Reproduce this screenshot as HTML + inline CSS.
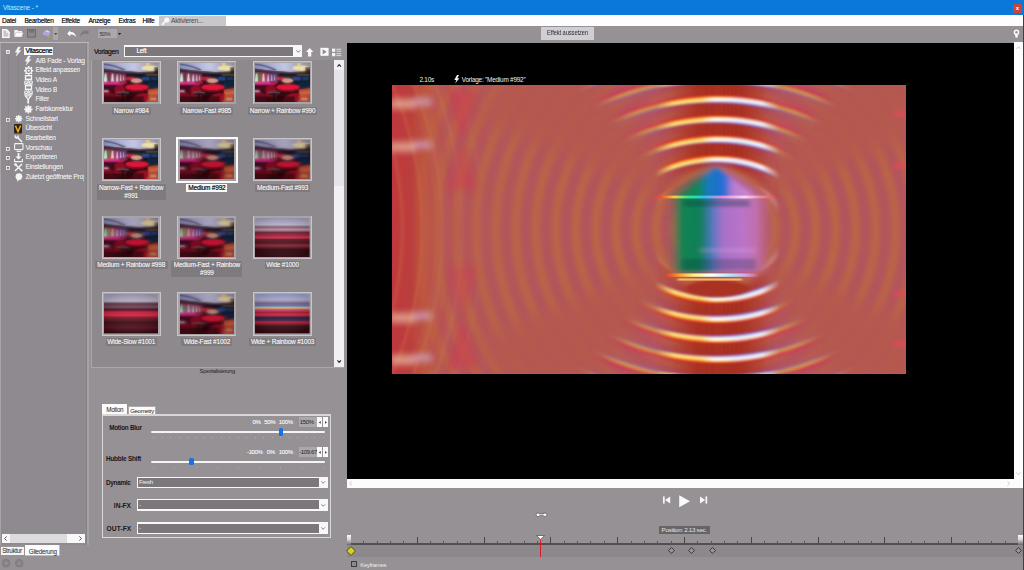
<!DOCTYPE html>
<html><head><meta charset="utf-8"><title>Vitascene</title>
<style>
*{box-sizing:border-box;margin:0;padding:0}
html,body{width:1024px;height:570px;overflow:hidden;background:#959195}
body{font-family:"Liberation Sans",sans-serif;font-size:6.6px;line-height:8px;color:#1c1c1c;position:relative;letter-spacing:-0.12px}
.a{position:absolute}
.t{position:absolute;white-space:nowrap}
.w{color:#ececec}
.b{font-weight:bold}
svg{position:absolute;overflow:visible}
</style></head><body>

<!-- g1_top -->
<div class="a" style="left:0px;top:0px;width:1024px;height:15.2px;background:#0a78d8;"></div><div class="t " style="left:3px;top:3.8px;color:#b4f0ff;font-size:6.5px;letter-spacing:-0.15px">Vitascene - *</div><div class="a" style="left:1013px;top:4px;width:9.2px;height:9.2px;background:#c8453f;"></div><div class="t b" style="left:1015.8px;top:4.4px;color:#fff;font-size:6px">x</div><div class="a" style="left:0px;top:15.2px;width:1022.6px;height:11.3px;background:#fdfdfd;"></div><div class="t " style="left:2px;top:16.9px;color:#262226;font-size:6.6px;letter-spacing:-0.27px;text-shadow:0 0 0.5px #555">Datei</div><div class="t " style="left:24.4px;top:16.9px;color:#262226;font-size:6.6px;letter-spacing:-0.27px;text-shadow:0 0 0.5px #555">Bearbeiten</div><div class="t " style="left:61.4px;top:16.9px;color:#262226;font-size:6.6px;letter-spacing:-0.27px;text-shadow:0 0 0.5px #555">Effekte</div><div class="t " style="left:88.4px;top:16.9px;color:#262226;font-size:6.6px;letter-spacing:-0.27px;text-shadow:0 0 0.5px #555">Anzeige</div><div class="t " style="left:118.4px;top:16.9px;color:#262226;font-size:6.6px;letter-spacing:-0.27px;text-shadow:0 0 0.5px #555">Extras</div><div class="t " style="left:142.6px;top:16.9px;color:#262226;font-size:6.6px;letter-spacing:-0.27px;text-shadow:0 0 0.5px #555">Hilfe</div><div class="a" style="left:159.4px;top:15.6px;width:66.6px;height:10.6px;background:#c9c7c9;"></div><div class="t " style="left:171px;top:16.9px;color:#4a464a;font-size:6.6px;letter-spacing:-0.2px">Aktivieren...</div><svg style="left:161.2px;top:16.6px" width="9" height="9" viewBox="0 0 9 9"><circle cx="5.8" cy="3" r="2.5" fill="#f8f8f8"/><path d="M4.4 4.4L0.8 8" stroke="#f8f8f8" stroke-width="1.7"/><path d="M2 6.6L3.2 7.8" stroke="#f8f8f8" stroke-width="1"/></svg><div class="a" style="left:0px;top:26.5px;width:1022.6px;height:15.7px;background:#959195;"></div><svg style="left:2.3px;top:29px" width="8" height="9" viewBox="0 0 8 9"><path d="M0.7 0.7H4.6L7.1 3.2V8.3H0.7Z" fill="#c9c5c9" stroke="#fbfbfb" stroke-width="1.3"/><path d="M4.4 0.8V3.4H7" fill="none" stroke="#fbfbfb" stroke-width="0.8"/></svg><svg style="left:14px;top:29px" width="9.4" height="9" viewBox="0 0 9.4 9"><path d="M0.3 1H3.4L4.2 2H8V8H0.3Z" fill="#f2f0f2"/><path d="M0.3 8L1.8 3.6H9.3L7.8 8Z" fill="#fbfbfb" stroke="#a4a0a4" stroke-width="0.4"/></svg><svg style="left:27px;top:29.2px" width="9" height="8.6" viewBox="0 0 9 8.6"><rect x="0.5" y="0.5" width="8" height="7.6" fill="#8c888c" stroke="#6f6b6f" stroke-width="1"/><rect x="1.8" y="0.8" width="5.4" height="2.8" fill="#757175"/></svg><svg style="left:42px;top:28.8px" width="9.4" height="9.4" viewBox="0 0 9.4 9.4"><path d="M0.8 4.2C2 1.2 6 0.6 8.6 3.2C8.2 5.6 6.4 7 4 6.6C2.6 6.4 1.4 5.6 0.8 4.2Z" fill="#a8a6e6"/><path d="M3 2C4.6 1.2 6.6 1.6 7.8 3.2C6 3.4 4.4 3 3 2Z" fill="#d6d8ff"/><path d="M1 4.6L2.4 6.2M5.6 6.6L6.4 8.4M6 7.2L7.4 6.6" stroke="#e0b030" stroke-width="0.9"/></svg><div class="a" style="left:53px;top:26.6px;width:5.4px;height:13px;background:#aaa6aa;"></div><svg style="left:54px;top:32.6px" width="3.4" height="2" viewBox="0 0 3.4 2"><path d="M0 0H3.4L1.7 2Z" fill="#4e4a4e"/></svg><svg style="left:66.6px;top:30px" width="9.4" height="7.4" viewBox="0 0 9.4 7.4"><path d="M0.2 3.4L3.2 0.2V2C6.4 1.6 8.8 3.6 9 7.2C7.8 5 6 4.2 3.2 4.6V6.4Z" fill="#fbfbfb"/></svg><svg style="left:79.6px;top:30.4px" width="8.6" height="7" viewBox="0 0 8.6 7"><path d="M8.6 0.6H5.6C2.6 0.6 0.6 2.6 0.2 6.8C1.6 4.4 3 3.6 5.4 3.8H8.6Z" fill="#7e7a7e"/></svg><div class="a" style="left:98.2px;top:29px;width:18.6px;height:9px;background:#aba7ab;"></div><div class="t " style="left:99.4px;top:29.6px;color:#3a363a;font-size:5.9px;letter-spacing:-0.3px">50%</div><svg style="left:118.2px;top:32.6px" width="3.2" height="2" viewBox="0 0 3.2 2"><path d="M0 0H3.2L1.6 2Z" fill="#1c1c1c"/></svg><div class="a" style="left:541px;top:26.5px;width:53px;height:13.6px;background:#d1ced3;"></div><div class="t " style="left:546.6px;top:29.4px;color:#302c30;font-size:7px;letter-spacing:-0.1px;transform:scaleX(0.82);transform-origin:0 0">Effekt aussetzen</div><svg style="left:1013.4px;top:28.6px" width="7" height="9.4" viewBox="0 0 7 9.4"><path d="M3.5 0.4A2.9 2.9 0 0 1 6.4 3.3C6.4 5 4.6 5.8 4.4 8.8H2.6C2.4 5.8 0.6 5 0.6 3.3A2.9 2.9 0 0 1 3.5 0.4Z" fill="#f8f8f8"/><circle cx="3.5" cy="3.2" r="1.2" fill="#959195"/></svg>
<!-- g2_tree -->
<div class="a" style="left:0px;top:42px;width:89px;height:503.4px;background:#a6a2a6;"></div><div class="a" style="left:1.4px;top:43.2px;width:85.2px;height:501.4px;background:#8e8a8f;"></div><div class="a" style="left:86.2px;top:43.2px;width:0.9px;height:501.4px;background:#858186;"></div><div class="a" style="left:0px;top:42px;width:88.6px;height:1.2px;background:#bebabe;"></div><div class="a" style="left:7.8px;top:55px;width:0.5px;height:118px;background:#878387;"></div><div class="a" style="left:18.2px;top:56px;width:0.5px;height:53px;background:#878387;"></div><svg style="left:6px;top:49.9px" width="3.8" height="3.8" viewBox="0 0 3.8 3.8"><rect x="0" y="0" width="3.8" height="3.8" fill="#f2f2f2"/><path d="M0.8 1.9H3" stroke="#4a464a" stroke-width="0.8"/></svg><svg style="left:15.4px;top:46.5px" width="6" height="9" viewBox="0 0 6 9"><path d="M3.2 0L0.3 5.2H2.6L1.2 9L5.8 3.5H3.5L5.4 0Z" fill="#f4f4f4" stroke="#f4f4f4" stroke-width="0.5" stroke-linejoin="round"/></svg><div class="a" style="left:24.2px;top:46.6px;width:29px;height:8.9px;background:#fafafa;"></div><div class="t " style="left:25.4px;top:47px;color:#1a161a;font-size:6.7px;letter-spacing:-0.28px;text-shadow:0 0 0.5px #333">Vitascene</div><svg style="left:25.4px;top:56.17px" width="6" height="9" viewBox="0 0 6 9"><path d="M3.2 0L0.3 5.2H2.6L1.2 9L5.8 3.5H3.5L5.4 0Z" fill="#f4f4f4" stroke="#f4f4f4" stroke-width="0.5" stroke-linejoin="round"/></svg><div class="t w" style="left:35.4px;top:56.67px;font-size:6.7px;letter-spacing:-0.2px;max-width:50.8px;overflow:hidden;color:#e4e2e4;text-shadow:0 0 0.5px #dcdcdc">A/B Fade - Vorlag</div><svg style="left:23.7px;top:65.64px" width="9.4" height="9.4" viewBox="0 0 9.4 9.4"><rect x="3.9" y="0" width="1.6" height="9.4" transform="rotate(0 4.7 4.7)" fill="#f4f4f4"/><rect x="3.9" y="0" width="1.6" height="9.4" transform="rotate(45 4.7 4.7)" fill="#f4f4f4"/><rect x="3.9" y="0" width="1.6" height="9.4" transform="rotate(90 4.7 4.7)" fill="#f4f4f4"/><rect x="3.9" y="0" width="1.6" height="9.4" transform="rotate(135 4.7 4.7)" fill="#f4f4f4"/><circle cx="4.7" cy="4.7" r="3.4" fill="#f4f4f4"/><circle cx="4.7" cy="4.7" r="2.2" fill="#8e8a8f"/><circle cx="4.7" cy="4.7" r="1.1" fill="#f4f4f4"/></svg><div class="t w" style="left:35.4px;top:66.34px;font-size:6.7px;letter-spacing:-0.2px;max-width:50.8px;overflow:hidden;color:#e4e2e4;text-shadow:0 0 0.5px #dcdcdc">Effekt anpassen</div><svg style="left:23.9px;top:75.21px" width="9" height="9.6" viewBox="0 0 9 9.6"><rect x="1.5" y="0.7" width="6" height="3.6" fill="none" stroke="#f4f4f4" stroke-width="1.4"/><path d="M4.5 4.6V6.2" stroke="#f4f4f4" stroke-width="1.2"/><circle cx="2" cy="7.1" r="1.4" fill="none" stroke="#f4f4f4" stroke-width="1.1"/><circle cx="7" cy="7.1" r="1.4" fill="none" stroke="#f4f4f4" stroke-width="1.1"/><path d="M3.2 7.1H5.8M0.3 9.1H8.7" stroke="#f4f4f4" stroke-width="1.1"/></svg><div class="t w" style="left:35.4px;top:76.01px;font-size:6.7px;letter-spacing:-0.2px;max-width:50.8px;overflow:hidden;color:#e4e2e4;text-shadow:0 0 0.5px #dcdcdc">Video A</div><svg style="left:23.9px;top:84.88px" width="9" height="9.6" viewBox="0 0 9 9.6"><rect x="1.5" y="0.7" width="6" height="3.6" fill="none" stroke="#f4f4f4" stroke-width="1.4"/><path d="M4.5 4.6V6.2" stroke="#f4f4f4" stroke-width="1.2"/><circle cx="2" cy="7.1" r="1.4" fill="none" stroke="#f4f4f4" stroke-width="1.1"/><circle cx="7" cy="7.1" r="1.4" fill="none" stroke="#f4f4f4" stroke-width="1.1"/><path d="M3.2 7.1H5.8M0.3 9.1H8.7" stroke="#f4f4f4" stroke-width="1.1"/></svg><div class="t w" style="left:35.4px;top:85.68px;font-size:6.7px;letter-spacing:-0.2px;max-width:50.8px;overflow:hidden;color:#e4e2e4;text-shadow:0 0 0.5px #dcdcdc">Video B</div><svg style="left:24.2px;top:95.05px" width="8.4" height="8.6" viewBox="0 0 8.4 8.6"><path d="M0 0.2H8.4L5.1 4.2V8.4H3.3V4.2Z" fill="#f4f4f4"/><path d="M2.6 1.4H5.8L4.2 3.2Z" fill="#8e8a8f"/></svg><div class="t w" style="left:35.4px;top:95.35px;font-size:6.7px;letter-spacing:-0.2px;max-width:50.8px;overflow:hidden;color:#e4e2e4;text-shadow:0 0 0.5px #dcdcdc">Filter</div><svg style="left:24.1px;top:104.72px" width="8.6" height="8.6" viewBox="0 0 8.6 8.6"><rect x="3.65" y="0" width="1.3" height="8.6" transform="rotate(0 4.3 4.3)" fill="#f4f4f4"/><rect x="3.65" y="0" width="1.3" height="8.6" transform="rotate(45 4.3 4.3)" fill="#f4f4f4"/><rect x="3.65" y="0" width="1.3" height="8.6" transform="rotate(90 4.3 4.3)" fill="#f4f4f4"/><rect x="3.65" y="0" width="1.3" height="8.6" transform="rotate(135 4.3 4.3)" fill="#f4f4f4"/><rect x="3.9" y="0.86" width="0.8" height="6.88" transform="rotate(22.5 4.3 4.3)" fill="#f4f4f4"/><rect x="3.9" y="0.86" width="0.8" height="6.88" transform="rotate(67.5 4.3 4.3)" fill="#f4f4f4"/><rect x="3.9" y="0.86" width="0.8" height="6.88" transform="rotate(112.5 4.3 4.3)" fill="#f4f4f4"/><rect x="3.9" y="0.86" width="0.8" height="6.88" transform="rotate(157.5 4.3 4.3)" fill="#f4f4f4"/><circle cx="4.3" cy="4.3" r="2.58" fill="#f4f4f4"/></svg><div class="t w" style="left:35.4px;top:105.02px;font-size:6.7px;letter-spacing:-0.2px;max-width:50.8px;overflow:hidden;color:#e4e2e4;text-shadow:0 0 0.5px #dcdcdc">Farbkorrektur</div><svg style="left:6px;top:117.59px" width="3.8" height="3.8" viewBox="0 0 3.8 3.8"><rect x="0" y="0" width="3.8" height="3.8" fill="#f2f2f2"/><path d="M0.8 1.9H3" stroke="#4a464a" stroke-width="0.8"/><path d="M1.9 0.8V3" stroke="#4a464a" stroke-width="0.8"/></svg><svg style="left:14.7px;top:114.99px" width="7.4" height="7.4" viewBox="0 0 7.4 7.4"><rect x="3.05" y="0" width="1.3" height="7.4" transform="rotate(0 3.7 3.7)" fill="#f4f4f4"/><rect x="3.05" y="0" width="1.3" height="7.4" transform="rotate(45 3.7 3.7)" fill="#f4f4f4"/><rect x="3.05" y="0" width="1.3" height="7.4" transform="rotate(90 3.7 3.7)" fill="#f4f4f4"/><rect x="3.05" y="0" width="1.3" height="7.4" transform="rotate(135 3.7 3.7)" fill="#f4f4f4"/><rect x="3.3" y="0.74" width="0.8" height="5.92" transform="rotate(22.5 3.7 3.7)" fill="#f4f4f4"/><rect x="3.3" y="0.74" width="0.8" height="5.92" transform="rotate(67.5 3.7 3.7)" fill="#f4f4f4"/><rect x="3.3" y="0.74" width="0.8" height="5.92" transform="rotate(112.5 3.7 3.7)" fill="#f4f4f4"/><rect x="3.3" y="0.74" width="0.8" height="5.92" transform="rotate(157.5 3.7 3.7)" fill="#f4f4f4"/><circle cx="3.7" cy="3.7" r="2.22" fill="#f4f4f4"/></svg><div class="t w" style="left:25.4px;top:114.69px;font-size:6.7px;letter-spacing:-0.2px;max-width:60.8px;overflow:hidden;color:#e4e2e4;text-shadow:0 0 0.5px #dcdcdc">Schnellstart</div><svg style="left:14.4px;top:123.66px" width="8" height="9.4" viewBox="0 0 8 9.4"><rect x="0" y="0" width="8" height="9.4" rx="1" fill="#2a2418"/><path d="M1.4 1.6L4 7.6L6.6 1.6" fill="none" stroke="#e8a818" stroke-width="1.5"/></svg><div class="t w" style="left:25.4px;top:124.36px;font-size:6.7px;letter-spacing:-0.2px;max-width:60.8px;overflow:hidden;color:#e4e2e4;text-shadow:0 0 0.5px #dcdcdc">Übersicht</div><svg style="left:13.9px;top:133.53px" width="9" height="9" viewBox="0 0 9 9"><path d="M1.2 0.6C0 1.8 0.2 3.6 1.6 4.4C2.2 4.8 3 4.8 3.6 4.6L7.4 8.6L8.6 7.4L4.8 3.4C5 2.4 4.6 1.4 3.8 0.8L3.4 2.6L2 2.8L1.2 0.6Z" fill="#f4f4f4"/></svg><div class="t w" style="left:25.4px;top:134.03px;font-size:6.7px;letter-spacing:-0.2px;max-width:60.8px;overflow:hidden;color:#e4e2e4;text-shadow:0 0 0.5px #dcdcdc">Bearbeiten</div><svg style="left:6px;top:146.6px" width="3.8" height="3.8" viewBox="0 0 3.8 3.8"><rect x="0" y="0" width="3.8" height="3.8" fill="#f2f2f2"/><path d="M0.8 1.9H3" stroke="#4a464a" stroke-width="0.8"/><path d="M1.9 0.8V3" stroke="#4a464a" stroke-width="0.8"/></svg><svg style="left:13.6px;top:143.2px" width="9.6" height="9" viewBox="0 0 9.6 9"><rect x="0.6" y="0.6" width="8.4" height="6" rx="0.8" fill="none" stroke="#f4f4f4" stroke-width="1.1"/><path d="M2.6 8.4H7" stroke="#f4f4f4" stroke-width="1.1"/></svg><div class="t w" style="left:25.4px;top:143.7px;font-size:6.7px;letter-spacing:-0.2px;max-width:60.8px;overflow:hidden;color:#e4e2e4;text-shadow:0 0 0.5px #dcdcdc">Vorschau</div><svg style="left:6px;top:156.27px" width="3.8" height="3.8" viewBox="0 0 3.8 3.8"><rect x="0" y="0" width="3.8" height="3.8" fill="#f2f2f2"/><path d="M0.8 1.9H3" stroke="#4a464a" stroke-width="0.8"/><path d="M1.9 0.8V3" stroke="#4a464a" stroke-width="0.8"/></svg><svg style="left:13.9px;top:152.67px" width="9" height="9.4" viewBox="0 0 9 9.4"><path d="M3.6 0H5.4V3.4H7.6L4.5 6.6L1.4 3.4H3.6Z" fill="#f4f4f4"/><path d="M0.6 6V8.6H8.4V6" fill="none" stroke="#f4f4f4" stroke-width="1.1"/></svg><div class="t w" style="left:25.4px;top:153.37px;font-size:6.7px;letter-spacing:-0.2px;max-width:60.8px;overflow:hidden;color:#e4e2e4;text-shadow:0 0 0.5px #dcdcdc">Exportieren</div><svg style="left:6px;top:165.94px" width="3.8" height="3.8" viewBox="0 0 3.8 3.8"><rect x="0" y="0" width="3.8" height="3.8" fill="#f2f2f2"/><path d="M0.8 1.9H3" stroke="#4a464a" stroke-width="0.8"/><path d="M1.9 0.8V3" stroke="#4a464a" stroke-width="0.8"/></svg><svg style="left:13.9px;top:162.54px" width="9" height="9" viewBox="0 0 9 9"><path d="M1 1L8 8M8 1L1 8" stroke="#f4f4f4" stroke-width="1.5"/><circle cx="1.6" cy="1.6" r="1.4" fill="#f4f4f4"/><circle cx="7.6" cy="7.6" r="1" fill="#f4f4f4"/></svg><div class="t w" style="left:25.4px;top:163.04px;font-size:6.7px;letter-spacing:-0.2px;max-width:60.8px;overflow:hidden;color:#e4e2e4;text-shadow:0 0 0.5px #dcdcdc">Einstellungen</div><svg style="left:14.5px;top:172.51px" width="7.8" height="8.8" viewBox="0 0 8.6 9.6"><circle cx="4.3" cy="3.8" r="3.7" fill="#f4f4f4"/><path d="M2.2 6.2L2.8 9.6L5.2 6.8Z" fill="#f4f4f4"/></svg><div class="t w" style="left:25.4px;top:172.71px;font-size:6.7px;letter-spacing:-0.2px;max-width:60.8px;overflow:hidden;color:#e4e2e4;text-shadow:0 0 0.5px #dcdcdc">Zuletzt geöffnete Proj</div><div class="a" style="left:1.7px;top:533.8px;width:83.2px;height:9.2px;background:#f8f8f8;"></div><div class="a" style="left:10.4px;top:533.8px;width:56.4px;height:9.2px;background:#dddbdd;"></div><svg style="left:4.4px;top:536.4px" width="3" height="5" viewBox="0 0 3 5"><path d="M2.6 0.4L0.6 2.5L2.6 4.6" fill="none" stroke="#4a464a" stroke-width="0.9"/></svg><svg style="left:78.8px;top:536.4px" width="3" height="5" viewBox="0 0 3 5"><path d="M0.4 0.4L2.4 2.5L0.4 4.6" fill="none" stroke="#4a464a" stroke-width="0.9"/></svg><div class="a" style="left:0.8px;top:546.6px;width:23.4px;height:8px;background:#f4f4f4;"></div><div class="t " style="left:2.2px;top:547.2px;color:#242024;font-size:6.3px;letter-spacing:-0.32px">Struktur</div><div class="a" style="left:25.2px;top:545.2px;width:34.6px;height:11.2px;background:#fbfbfb;border-right:1px solid #bdb9bd;border-bottom:1px solid #bdb9bd"></div><div class="t " style="left:28.8px;top:547.6px;color:#242024;font-size:6.3px;letter-spacing:-0.3px">Gliederung</div><svg style="left:2px;top:558.6px" width="8.4" height="8.4" viewBox="0 0 8.4 8.4"><circle cx="4.2" cy="4.2" r="3.9" fill="#858185" stroke="#7c787c" stroke-width="0.6"/><path d="M5 2.4L3 4.2L5 6M3 4.2H6.2" fill="none" stroke="#999599" stroke-width="1"/></svg><svg style="left:14.6px;top:558.6px" width="8.4" height="8.4" viewBox="0 0 8.4 8.4"><circle cx="4.2" cy="4.2" r="3.9" fill="#858185" stroke="#7c787c" stroke-width="0.6"/><path d="M3.4 2.4L5.4 4.2L3.4 6M5.4 4.2H2.2" fill="none" stroke="#999599" stroke-width="1"/></svg>
<!-- g3_templates -->
<svg width="0" height="0" style="left:0;top:0"><defs><filter id="fb0" x="-5%" y="-5%" width="110%" height="110%"><feGaussianBlur stdDeviation="0.85"/></filter><filter id="fb1" x="-5%" y="-5%" width="110%" height="110%"><feGaussianBlur stdDeviation="2.2 0.9"/></filter><filter id="fb2" x="-5%" y="-5%" width="110%" height="110%"><feGaussianBlur stdDeviation="7 1"/></filter><filter id="fs" x="-20%" y="-20%" width="140%" height="140%"><feGaussianBlur stdDeviation="1.2"/></filter><linearGradient id="rbw" x1="0" x2="1" y1="0" y2="0"><stop offset="0" stop-color="#40e0a0" stop-opacity="0.6"/><stop offset="0.25" stop-color="#f0e040" stop-opacity="0.5"/><stop offset="0.5" stop-color="#ff40c0" stop-opacity="0.4"/><stop offset="0.75" stop-color="#4060ff" stop-opacity="0.5"/><stop offset="1" stop-color="#40e0e0" stop-opacity="0.4"/></linearGradient><linearGradient id="w0" x1="0" x2="0" y1="0" y2="1"><stop offset="0" stop-color="#aaa4c6"/><stop offset="0.17" stop-color="#c2bcd4"/><stop offset="0.23" stop-color="#866070"/><stop offset="0.3" stop-color="#c092aa"/><stop offset="0.37" stop-color="#6c2030"/><stop offset="0.45" stop-color="#a42038"/><stop offset="0.5" stop-color="#d22a4a"/><stop offset="0.55" stop-color="#5c1020"/><stop offset="0.63" stop-color="#4c1018"/><stop offset="0.7" stop-color="#8a2434"/><stop offset="0.8" stop-color="#2e0810"/><stop offset="1" stop-color="#3e0c18"/></linearGradient><linearGradient id="w1" x1="0" x2="0" y1="0" y2="1"><stop offset="0" stop-color="#a8a4c0"/><stop offset="0.18" stop-color="#beb8cc"/><stop offset="0.25" stop-color="#5a3444"/><stop offset="0.33" stop-color="#7a4458"/><stop offset="0.4" stop-color="#42101c"/><stop offset="0.46" stop-color="#c01c3c"/><stop offset="0.54" stop-color="#dc2040"/><stop offset="0.6" stop-color="#7a1424"/><stop offset="0.72" stop-color="#3a0c14"/><stop offset="0.85" stop-color="#5a1020"/><stop offset="1" stop-color="#340a12"/></linearGradient><linearGradient id="w2" x1="0" x2="0" y1="0" y2="1"><stop offset="0" stop-color="#9ca8d4"/><stop offset="0.15" stop-color="#b4b4d8"/><stop offset="0.24" stop-color="#7c6488"/><stop offset="0.3" stop-color="#5a78c8"/><stop offset="0.35" stop-color="#d8c060"/><stop offset="0.4" stop-color="#c8407c"/><stop offset="0.47" stop-color="#a01c30"/><stop offset="0.53" stop-color="#d82238"/><stop offset="0.6" stop-color="#241838"/><stop offset="0.66" stop-color="#30204c"/><stop offset="0.72" stop-color="#b42036"/><stop offset="0.82" stop-color="#3a0c14"/><stop offset="1" stop-color="#300810"/></linearGradient><radialGradient id="wv" cx="0.5" cy="0.5" r="0.6"><stop offset="0" stop-color="#fff" stop-opacity="0.06"/><stop offset="1" stop-color="#000" stop-opacity="0.18"/></radialGradient><linearGradient id="ceil" x1="0" x2="1" y1="0" y2="0"><stop offset="0" stop-color="#8494c0"/><stop offset="0.3" stop-color="#aeb0d4"/><stop offset="0.55" stop-color="#c4c8e4"/><stop offset="0.75" stop-color="#aaa6c4"/><stop offset="1" stop-color="#8c869c"/></linearGradient><symbol id="scene" viewBox="0 0 56 40" preserveAspectRatio="none"><rect width="56" height="40" fill="#3a0c18"/><path d="M0 0H56V9L36 9.6L18 8.4L0 7Z" fill="url(#ceil)"/><path d="M0 1.2C8 1.6 16 4 23 7.6L21 8.2C14 5 7 3 0 2.8Z" fill="#4e4868"/><path d="M0 6L20 8.6L36 9.8L56 9V11.4L36 12L18 11L0 8.6Z" fill="#3c2434"/><ellipse cx="46.5" cy="6" rx="9" ry="2.6" fill="#ebe3aa"/><rect x="42.4" y="0" width="2.8" height="4.2" fill="#e8d272"/><rect x="50" y="5" width="6" height="8" fill="#2c1810" opacity="0.75"/><path d="M0 9L23 11.4V19H0Z" fill="#6c2c44"/><path d="M2.62 11H3.98L5 20H1.6Z" fill="#d8ffe8"/><path d="M9.44 11.4H10.56L11.4 19.4H8.6Z" fill="#ffe6f4"/><path d="M14.06 12H14.94L15.6 19H13.4Z" fill="#ffe0f0"/><path d="M17.51 12.4H18.19L18.7 18.4H17Z" fill="#f8d0e8"/><path d="M20.39 12.8H20.91L21.3 17.8H20Z" fill="#f0c0e0"/><rect x="0" y="13" width="1.4" height="8" fill="#50c890"/><path d="M24 11.6L56 11V27H30Z" fill="#121826"/><rect x="38.5" y="14.4" width="7" height="3.4" fill="#20478c"/><rect x="47" y="14.6" width="6" height="3" fill="#1c3860"/><rect x="42" y="11.8" width="12" height="1.2" fill="#9c9440" opacity="0.6"/><rect x="44" y="19" width="12" height="6" fill="#10283c"/><ellipse cx="26.5" cy="16" rx="5" ry="1.8" fill="#c2203e"/><ellipse cx="33" cy="18" rx="5.4" ry="2.2" fill="#dc9c8c"/><path d="M0 19.4C6 18 16 18.4 21 20.4V23H0Z" fill="#d22e84"/><rect x="0" y="22" width="21" height="6" fill="#40081a"/><ellipse cx="20" cy="19.8" rx="4" ry="1.2" fill="#b01840"/><path d="M40 27L56 25V40H40Z" fill="#bc4a30"/><path d="M43 29L56 27.6V30.6L44 32Z" fill="#cc7048" opacity="0.7"/><path d="M43 34L56 33V36L44 37Z" fill="#a84030" opacity="0.7"/><rect x="46" y="34.4" width="6" height="2.6" fill="#c8a078" opacity="0.8"/><path d="M23 26H44V36H23Z" fill="#2a0810"/><ellipse cx="33.4" cy="24.4" rx="11.2" ry="2.9" fill="#e2183a"/><path d="M22.4 25.2C27 28.4 40 28.4 44.4 25.2V26.6C40 29.6 27 29.6 22.4 26.6Z" fill="#8a0c20"/><path d="M12 26C12.6 22 19 21 21.4 24.4L23 34H12Z" fill="#8e0e24"/><path d="M0 28C4 27 10 29 12.6 33V40H0Z" fill="#7a0c20"/><rect x="0.6" y="27.4" width="5.6" height="1.6" fill="#d0a0c4"/><path d="M29 36C31 31 40 29.4 45 30.8L42.6 40H28Z" fill="#9a1026"/><path d="M0 33H40V40H0Z" fill="#30060e" opacity="0.75"/><ellipse cx="20" cy="29.8" rx="6" ry="1.3" fill="#7c6470"/><ellipse cx="20" cy="30.8" rx="6" ry="1.3" fill="#2a1018"/><rect x="19" y="31" width="2" height="9" fill="#1c080c"/></symbol></defs></svg><div class="t " style="left:94px;top:48px;color:#1e1a1e;font-size:6.8px;letter-spacing:-0.3px;text-shadow:0 0 0.5px #333">Vorlagen</div><div class="a" style="left:123.6px;top:45.3px;width:178.6px;height:11.7px;background:#f8f8f8;"></div><div class="a" style="left:124.8px;top:46.6px;width:168.4px;height:9.1px;background:#7b777b;"></div><div class="t w" style="left:136.4px;top:47.4px;font-size:6.6px;letter-spacing:-0.3px;text-shadow:0 0 0.5px #eee">Left</div><svg style="left:295.8px;top:50.4px" width="4.6" height="2.8" viewBox="0 0 5 3.2"><path d="M0.4 0.4L2.5 2.6L4.6 0.4" fill="none" stroke="#5a565a" stroke-width="0.9"/></svg><svg style="left:306.2px;top:47.8px" width="7.4" height="8.6" viewBox="0 0 7.4 8.6"><path d="M3.7 0L7.4 3.9H5.3V8.6H2.1V3.9H0Z" fill="#fafafa"/></svg><svg style="left:319.7px;top:47.2px" width="9.2" height="8.8" viewBox="0 0 9.2 8.8"><rect x="0.4" y="0.8" width="8.2" height="8" fill="#fafafa"/><path d="M2.6 2.2L6.8 4.8L2.6 7.4Z" fill="#8f8b8f"/></svg><svg style="left:331.8px;top:47.9px" width="9.2" height="8.8" viewBox="0 0 9.6 8.8"><rect x="0" y="0.4" width="3.4" height="3.4" fill="#f4f4f4"/><rect x="0" y="5" width="3.4" height="3.4" fill="#f4f4f4"/><rect x="4.6" y="0.6" width="5" height="1.1" fill="#dcdadc"/><rect x="4.6" y="2.6" width="5" height="1.1" fill="#dcdadc"/><rect x="4.6" y="5.2" width="5" height="1.1" fill="#dcdadc"/><rect x="4.6" y="7.2" width="5" height="1.1" fill="#dcdadc"/></svg><div class="a" style="left:90.6px;top:59.6px;width:253.4px;height:308.6px;background:#aaa6aa;"></div><div class="a" style="left:91.6px;top:60.4px;width:242.4px;height:307px;background:#8d898d;"></div><div class="a" style="left:334px;top:60.4px;width:9.5px;height:307px;background:#f2f0f2;"></div><div class="a" style="left:334px;top:69.8px;width:9.5px;height:116px;background:#e6e4e8;"></div><svg style="left:336.6px;top:64px" width="4.4" height="3" viewBox="0 0 5 3.4"><path d="M0.5 2.9L2.5 0.7L4.5 2.9" fill="none" stroke="#2a262a" stroke-width="1.3"/></svg><svg style="left:336.6px;top:359.6px" width="4.4" height="3" viewBox="0 0 5 3.4"><path d="M0.5 0.5L2.5 2.7L4.5 0.5" fill="none" stroke="#2a262a" stroke-width="1.3"/></svg><div class="a" style="left:101.7px;top:61px;width:59px;height:43.4px;background:#c9c5c9;"></div><div class="a" style="left:102.5px;top:61.8px;width:57.4px;height:41.8px;background:#a7a3a7;"></div><svg style="left:103.9px;top:63px;overflow:hidden" width="54.6" height="39.4" viewBox="0 0 56 40" preserveAspectRatio="none"><use href="#scene" x="-2" y="-1" width="60" height="42"/><g filter="url(#fb0)" opacity="0.62"><use href="#scene" x="-2" y="-1" width="60" height="42"/></g></svg><div class="a" style="left:111.6px;top:106.6px;width:39.2px;height:8.4px;background:#7e7a7e;"></div><div class="t" style="left:81.2px;top:106.8px;width:100px;text-align:center;color:#e8e6e8;font-size:6.5px;letter-spacing:-0.2px;text-shadow:0 0 0.5px #ddd">Narrow #984</div><div class="a" style="left:177.4px;top:61px;width:59px;height:43.4px;background:#c9c5c9;"></div><div class="a" style="left:178.2px;top:61.8px;width:57.4px;height:41.8px;background:#a7a3a7;"></div><svg style="left:179.6px;top:63px;overflow:hidden" width="54.6" height="39.4" viewBox="0 0 56 40" preserveAspectRatio="none"><use href="#scene" x="-2" y="-1" width="60" height="42"/><g filter="url(#fb0)" opacity="0.62"><use href="#scene" x="-2" y="-1" width="60" height="42"/></g></svg><div class="a" style="left:180.3px;top:106.6px;width:53.2px;height:8.4px;background:#7e7a7e;"></div><div class="t" style="left:156.9px;top:106.8px;width:100px;text-align:center;color:#e8e6e8;font-size:6.5px;letter-spacing:-0.2px;text-shadow:0 0 0.5px #ddd">Narrow-Fast #985</div><div class="a" style="left:253.1px;top:61px;width:59px;height:43.4px;background:#c9c5c9;"></div><div class="a" style="left:253.9px;top:61.8px;width:57.4px;height:41.8px;background:#a7a3a7;"></div><svg style="left:255.3px;top:63px;overflow:hidden" width="54.6" height="39.4" viewBox="0 0 56 40" preserveAspectRatio="none"><use href="#scene" x="-2" y="-1" width="60" height="42"/><g filter="url(#fb0)" opacity="0.62"><use href="#scene" x="-2" y="-1" width="60" height="42"/><rect x="0" y="10.5" width="24" height="8.5" fill="url(#rbw)" opacity="0.8"/><rect x="30" y="13" width="26" height="4" fill="url(#rbw)" opacity="0.35"/></g></svg><div class="a" style="left:248px;top:106.6px;width:69.2px;height:8.4px;background:#7e7a7e;"></div><div class="t" style="left:232.6px;top:106.8px;width:100px;text-align:center;color:#e8e6e8;font-size:6.5px;letter-spacing:-0.2px;text-shadow:0 0 0.5px #ddd">Narrow + Rainbow #990</div><div class="a" style="left:101.7px;top:137.9px;width:59px;height:43.4px;background:#c9c5c9;"></div><div class="a" style="left:102.5px;top:138.7px;width:57.4px;height:41.8px;background:#a7a3a7;"></div><svg style="left:103.9px;top:139.9px;overflow:hidden" width="54.6" height="39.4" viewBox="0 0 56 40" preserveAspectRatio="none"><use href="#scene" x="-2" y="-1" width="60" height="42"/><g filter="url(#fb0)" opacity="0.62"><use href="#scene" x="-2" y="-1" width="60" height="42"/><rect x="0" y="10.5" width="24" height="8.5" fill="url(#rbw)" opacity="0.8"/><rect x="30" y="13" width="26" height="4" fill="url(#rbw)" opacity="0.35"/></g></svg><div class="a" style="left:96.6px;top:183.5px;width:69.2px;height:16.2px;background:#7e7a7e;"></div><div class="t" style="left:81.2px;top:183.7px;width:100px;text-align:center;color:#e8e6e8;font-size:6.5px;letter-spacing:-0.2px;text-shadow:0 0 0.5px #ddd">Narrow-Fast + Rainbow</div><div class="t" style="left:81.2px;top:191.5px;width:100px;text-align:center;color:#e8e6e8;font-size:6.5px;letter-spacing:-0.2px;text-shadow:0 0 0.5px #ddd">#991</div><div class="a" style="left:175.8px;top:136.5px;width:62.2px;height:46.2px;background:#fafafa;"></div><div class="a" style="left:177.8px;top:138.5px;width:58.2px;height:42.2px;background:#a39fa3;"></div><svg style="left:179.6px;top:139.9px;overflow:hidden" width="54.6" height="39.4" viewBox="0 0 56 40" preserveAspectRatio="none"><use href="#scene" x="-2" y="-1" width="60" height="42"/><g filter="url(#fb1)" opacity="0.8"><use href="#scene" x="-2" y="-1" width="60" height="42"/></g><rect width="56" height="40" fill="#20000a" opacity="0.18"/></svg><div class="a" style="left:186.3px;top:183.5px;width:41.2px;height:8.4px;background:#fafafa;"></div><div class="t" style="left:156.9px;top:183.7px;width:100px;text-align:center;color:#1a161a;font-size:6.5px;letter-spacing:-0.2px;text-shadow:0 0 0.5px #333">Medium #992</div><div class="a" style="left:253.1px;top:137.9px;width:59px;height:43.4px;background:#c9c5c9;"></div><div class="a" style="left:253.9px;top:138.7px;width:57.4px;height:41.8px;background:#a7a3a7;"></div><svg style="left:255.3px;top:139.9px;overflow:hidden" width="54.6" height="39.4" viewBox="0 0 56 40" preserveAspectRatio="none"><use href="#scene" x="-2" y="-1" width="60" height="42"/><g filter="url(#fb1)" opacity="0.8"><use href="#scene" x="-2" y="-1" width="60" height="42"/></g><rect width="56" height="40" fill="#20000a" opacity="0.18"/></svg><div class="a" style="left:255px;top:183.5px;width:55.2px;height:8.4px;background:#7e7a7e;"></div><div class="t" style="left:232.6px;top:183.7px;width:100px;text-align:center;color:#e8e6e8;font-size:6.5px;letter-spacing:-0.2px;text-shadow:0 0 0.5px #ddd">Medium-Fast #993</div><div class="a" style="left:101.7px;top:215.5px;width:59px;height:43.4px;background:#c9c5c9;"></div><div class="a" style="left:102.5px;top:216.3px;width:57.4px;height:41.8px;background:#a7a3a7;"></div><svg style="left:103.9px;top:217.5px;overflow:hidden" width="54.6" height="39.4" viewBox="0 0 56 40" preserveAspectRatio="none"><use href="#scene" x="-2" y="-1" width="60" height="42"/><g filter="url(#fb1)" opacity="0.8"><use href="#scene" x="-2" y="-1" width="60" height="42"/><rect x="0" y="10.5" width="24" height="8.5" fill="url(#rbw)" opacity="0.8"/><rect x="30" y="13" width="26" height="4" fill="url(#rbw)" opacity="0.35"/></g><rect width="56" height="40" fill="#20000a" opacity="0.18"/></svg><div class="a" style="left:94.6px;top:261.1px;width:73.2px;height:8.4px;background:#7e7a7e;"></div><div class="t" style="left:81.2px;top:261.3px;width:100px;text-align:center;color:#e8e6e8;font-size:6.5px;letter-spacing:-0.2px;text-shadow:0 0 0.5px #ddd">Medium + Rainbow #998</div><div class="a" style="left:177.4px;top:215.5px;width:59px;height:43.4px;background:#c9c5c9;"></div><div class="a" style="left:178.2px;top:216.3px;width:57.4px;height:41.8px;background:#a7a3a7;"></div><svg style="left:179.6px;top:217.5px;overflow:hidden" width="54.6" height="39.4" viewBox="0 0 56 40" preserveAspectRatio="none"><use href="#scene" x="-2" y="-1" width="60" height="42"/><g filter="url(#fb1)" opacity="0.8"><use href="#scene" x="-2" y="-1" width="60" height="42"/><rect x="0" y="10.5" width="24" height="8.5" fill="url(#rbw)" opacity="0.8"/><rect x="30" y="13" width="26" height="4" fill="url(#rbw)" opacity="0.35"/></g><rect width="56" height="40" fill="#20000a" opacity="0.18"/></svg><div class="a" style="left:171.3px;top:261.1px;width:71.2px;height:16.2px;background:#7e7a7e;"></div><div class="t" style="left:156.9px;top:261.3px;width:100px;text-align:center;color:#e8e6e8;font-size:6.5px;letter-spacing:-0.2px;text-shadow:0 0 0.5px #ddd">Medium-Fast + Rainbow</div><div class="t" style="left:156.9px;top:269.1px;width:100px;text-align:center;color:#e8e6e8;font-size:6.5px;letter-spacing:-0.2px;text-shadow:0 0 0.5px #ddd">#999</div><div class="a" style="left:253.1px;top:215.5px;width:59px;height:43.4px;background:#c9c5c9;"></div><div class="a" style="left:253.9px;top:216.3px;width:57.4px;height:41.8px;background:#a7a3a7;"></div><svg style="left:255.3px;top:217.5px;overflow:hidden" width="54.6" height="39.4" viewBox="0 0 56 40" preserveAspectRatio="none"><rect width="56" height="40" fill="url(#w0)"/><rect width="56" height="40" fill="url(#wv)"/></svg><div class="a" style="left:265px;top:261.1px;width:35.2px;height:8.4px;background:#7e7a7e;"></div><div class="t" style="left:232.6px;top:261.3px;width:100px;text-align:center;color:#e8e6e8;font-size:6.5px;letter-spacing:-0.2px;text-shadow:0 0 0.5px #ddd">Wide #1000</div><div class="a" style="left:101.7px;top:292.3px;width:59px;height:43.4px;background:#c9c5c9;"></div><div class="a" style="left:102.5px;top:293.1px;width:57.4px;height:41.8px;background:#a7a3a7;"></div><svg style="left:103.9px;top:294.3px;overflow:hidden" width="54.6" height="39.4" viewBox="0 0 56 40" preserveAspectRatio="none"><rect width="56" height="40" fill="url(#w1)"/><rect width="56" height="40" fill="url(#wv)"/></svg><div class="a" style="left:105.6px;top:337.9px;width:51.2px;height:8.4px;background:#7e7a7e;"></div><div class="t" style="left:81.2px;top:338.1px;width:100px;text-align:center;color:#e8e6e8;font-size:6.5px;letter-spacing:-0.2px;text-shadow:0 0 0.5px #ddd">Wide-Slow #1001</div><div class="a" style="left:177.4px;top:292.3px;width:59px;height:43.4px;background:#c9c5c9;"></div><div class="a" style="left:178.2px;top:293.1px;width:57.4px;height:41.8px;background:#a7a3a7;"></div><svg style="left:179.6px;top:294.3px;overflow:hidden" width="54.6" height="39.4" viewBox="0 0 56 40" preserveAspectRatio="none"><use href="#scene" x="-2" y="-1" width="60" height="42"/><g filter="url(#fb1)" opacity="0.8"><use href="#scene" x="-2" y="-1" width="60" height="42"/></g><rect width="56" height="40" fill="#20000a" opacity="0.18"/></svg><div class="a" style="left:181.3px;top:337.9px;width:51.2px;height:8.4px;background:#7e7a7e;"></div><div class="t" style="left:156.9px;top:338.1px;width:100px;text-align:center;color:#e8e6e8;font-size:6.5px;letter-spacing:-0.2px;text-shadow:0 0 0.5px #ddd">Wide-Fast #1002</div><div class="a" style="left:253.1px;top:292.3px;width:59px;height:43.4px;background:#c9c5c9;"></div><div class="a" style="left:253.9px;top:293.1px;width:57.4px;height:41.8px;background:#a7a3a7;"></div><svg style="left:255.3px;top:294.3px;overflow:hidden" width="54.6" height="39.4" viewBox="0 0 56 40" preserveAspectRatio="none"><rect width="56" height="40" fill="url(#w2)"/><rect width="56" height="40" fill="url(#wv)"/></svg><div class="a" style="left:249px;top:337.9px;width:67.2px;height:8.4px;background:#7e7a7e;"></div><div class="t" style="left:232.6px;top:338.1px;width:100px;text-align:center;color:#e8e6e8;font-size:6.5px;letter-spacing:-0.2px;text-shadow:0 0 0.5px #ddd">Wide + Rainbow #1003</div><div class="t " style="left:199.6px;top:366.8px;color:#2a262a;font-size:5.9px;letter-spacing:-0.3px">Spezialisierung</div>
<!-- g4_params -->
<div class="a" style="left:101.8px;top:404.2px;width:25.6px;height:11.4px;background:#fbfbfb;"></div><div class="t " style="left:106.2px;top:405.6px;color:#1e1a1e;font-size:6.3px;letter-spacing:-0.3px">Motion</div><div class="a" style="left:128px;top:406px;width:28px;height:9px;background:#fbfbfb;border:0.7px solid #aca8ac"></div><div class="t " style="left:130.2px;top:407px;color:#1e1a1e;font-size:6.1px;letter-spacing:-0.36px">Geometry</div><div class="a" style="left:101.8px;top:414.4px;width:229.6px;height:124px;background:#d9d7d9;"></div><div class="a" style="left:102.8px;top:416px;width:227.6px;height:121.4px;background:#959195;"></div><div class="t b" style="left:109.2px;top:423.6px;color:#1a161a;font-size:6.4px;letter-spacing:-0.28px">Motion Blur</div><div class="a" style="left:151.2px;top:430.7px;width:174px;height:2.5px;background:#f4f4f4;border-radius:1.2px"></div><div class="a" style="left:278.9px;top:428.4px;width:4.6px;height:7.2px;background:#1473e2;border-radius:1.6px"></div><div class="a" style="left:153.05px;top:436.7px;width:0.7px;height:1.3px;background:#b4b0b4;"></div><div class="a" style="left:161.54px;top:436.7px;width:0.7px;height:1.3px;background:#b4b0b4;"></div><div class="a" style="left:170.03px;top:436.7px;width:0.7px;height:1.3px;background:#b4b0b4;"></div><div class="a" style="left:178.52px;top:436.7px;width:0.7px;height:1.3px;background:#b4b0b4;"></div><div class="a" style="left:187.01px;top:436.7px;width:0.7px;height:1.3px;background:#b4b0b4;"></div><div class="a" style="left:195.5px;top:436.7px;width:0.7px;height:1.3px;background:#b4b0b4;"></div><div class="a" style="left:203.99px;top:436.7px;width:0.7px;height:1.3px;background:#b4b0b4;"></div><div class="a" style="left:212.48px;top:436.7px;width:0.7px;height:1.3px;background:#b4b0b4;"></div><div class="a" style="left:220.97px;top:436.7px;width:0.7px;height:1.3px;background:#b4b0b4;"></div><div class="a" style="left:229.46px;top:436.7px;width:0.7px;height:1.3px;background:#b4b0b4;"></div><div class="a" style="left:237.95px;top:436.7px;width:0.7px;height:1.3px;background:#b4b0b4;"></div><div class="a" style="left:246.44px;top:436.7px;width:0.7px;height:1.3px;background:#b4b0b4;"></div><div class="a" style="left:254.93px;top:436.7px;width:0.7px;height:1.3px;background:#b4b0b4;"></div><div class="a" style="left:263.42px;top:436.7px;width:0.7px;height:1.3px;background:#b4b0b4;"></div><div class="a" style="left:271.91px;top:436.7px;width:0.7px;height:1.3px;background:#b4b0b4;"></div><div class="a" style="left:280.4px;top:436.7px;width:0.7px;height:1.3px;background:#b4b0b4;"></div><div class="a" style="left:288.89px;top:436.7px;width:0.7px;height:1.3px;background:#b4b0b4;"></div><div class="a" style="left:297.38px;top:436.7px;width:0.7px;height:1.3px;background:#b4b0b4;"></div><div class="a" style="left:305.87px;top:436.7px;width:0.7px;height:1.3px;background:#b4b0b4;"></div><div class="a" style="left:314.36px;top:436.7px;width:0.7px;height:1.3px;background:#b4b0b4;"></div><div class="a" style="left:322.85px;top:436.7px;width:0.7px;height:1.3px;background:#b4b0b4;"></div><div class="t w" style="left:252.6px;top:418px;font-size:6.1px;letter-spacing:-0.4px;color:#ecebec;text-shadow:0 0 0.5px #e8e8e8">0%</div><div class="t w" style="left:264.2px;top:418px;font-size:6.1px;letter-spacing:-0.4px;color:#ecebec;text-shadow:0 0 0.5px #e8e8e8">50%</div><div class="t w" style="left:278.8px;top:418px;font-size:6.1px;letter-spacing:-0.4px;color:#ecebec;text-shadow:0 0 0.5px #e8e8e8">100%</div><div class="a" style="left:298.8px;top:417.4px;width:18px;height:9.2px;background:#aba7ab;"></div><div class="t " style="left:299.8px;top:418.2px;color:#2a262a;font-size:6.1px;letter-spacing:-0.4px">150%</div><div class="a" style="left:317.2px;top:417.4px;width:4.9px;height:9.2px;background:#fafafa;"></div><svg style="left:317.7px;top:419.6px" width="3.8" height="4.8" viewBox="0 0 3.8 4.8"><path d="M2.6 1L1 2.4L2.6 3.8Z" fill="#1c1c1c"/></svg><div class="a" style="left:323.3px;top:417.4px;width:4.9px;height:9.2px;background:#fafafa;"></div><svg style="left:323.8px;top:419.6px" width="3.8" height="4.8" viewBox="0 0 3.8 4.8"><path d="M1.2 1L2.8 2.4L1.2 3.8Z" fill="#1c1c1c"/></svg><div class="t b" style="left:106px;top:454.6px;color:#1a161a;font-size:6.4px;letter-spacing:-0.22px">Hubble Shift</div><div class="a" style="left:151.2px;top:460.6px;width:174px;height:2.5px;background:#f4f4f4;border-radius:1.2px"></div><div class="a" style="left:189.1px;top:458.3px;width:4.6px;height:7.2px;background:#1473e2;border-radius:1.6px"></div><div class="a" style="left:153.05px;top:466.6px;width:0.7px;height:1.3px;background:#b4b0b4;"></div><div class="a" style="left:174.275px;top:466.6px;width:0.7px;height:1.3px;background:#b4b0b4;"></div><div class="a" style="left:195.5px;top:466.6px;width:0.7px;height:1.3px;background:#b4b0b4;"></div><div class="a" style="left:216.725px;top:466.6px;width:0.7px;height:1.3px;background:#b4b0b4;"></div><div class="a" style="left:237.95px;top:466.6px;width:0.7px;height:1.3px;background:#b4b0b4;"></div><div class="a" style="left:259.175px;top:466.6px;width:0.7px;height:1.3px;background:#b4b0b4;"></div><div class="a" style="left:280.4px;top:466.6px;width:0.7px;height:1.3px;background:#b4b0b4;"></div><div class="a" style="left:301.625px;top:466.6px;width:0.7px;height:1.3px;background:#b4b0b4;"></div><div class="a" style="left:322.85px;top:466.6px;width:0.7px;height:1.3px;background:#b4b0b4;"></div><div class="t w" style="left:247px;top:448.4px;font-size:6.1px;letter-spacing:-0.4px;color:#ecebec;text-shadow:0 0 0.5px #e8e8e8">-100%</div><div class="t w" style="left:266.8px;top:448.4px;font-size:6.1px;letter-spacing:-0.4px;color:#ecebec;text-shadow:0 0 0.5px #e8e8e8">0%</div><div class="t w" style="left:278.8px;top:448.4px;font-size:6.1px;letter-spacing:-0.4px;color:#ecebec;text-shadow:0 0 0.5px #e8e8e8">100%</div><div class="a" style="left:298.8px;top:447.4px;width:18px;height:9.2px;background:#aba7ab;"></div><div class="t" style="left:299.2px;top:448.2px;width:17.4px;overflow:hidden;color:#2a262a;font-size:6.1px;letter-spacing:-0.4px">-109.67</div><div class="a" style="left:317.2px;top:447.4px;width:4.9px;height:9.2px;background:#fafafa;"></div><svg style="left:317.7px;top:449.6px" width="3.8" height="4.8" viewBox="0 0 3.8 4.8"><path d="M2.6 1L1 2.4L2.6 3.8Z" fill="#1c1c1c"/></svg><div class="a" style="left:323.3px;top:447.4px;width:4.9px;height:9.2px;background:#fafafa;"></div><svg style="left:323.8px;top:449.6px" width="3.8" height="4.8" viewBox="0 0 3.8 4.8"><path d="M1.2 1L2.8 2.4L1.2 3.8Z" fill="#1c1c1c"/></svg><div class="t b" style="left:106px;top:478.6px;color:#1a161a;font-size:6.4px;letter-spacing:-0.3px">Dynamic</div><div class="a" style="left:136.6px;top:476.6px;width:191.6px;height:11.2px;background:#f8f8f8;"></div><div class="a" style="left:137.8px;top:477.8px;width:181px;height:8.8px;background:#7b777b;"></div><svg style="left:321.4px;top:481.2px" width="4.4" height="2.8" viewBox="0 0 5 3.2"><path d="M0.4 0.4L2.5 2.6L4.6 0.4" fill="none" stroke="#6a666a" stroke-width="0.9"/></svg><div class="t w" style="left:139px;top:478px;font-size:6.2px;letter-spacing:-0.4px">Fresh</div><div class="t b" style="left:113.8px;top:501.6px;color:#1a161a;font-size:6.6px;letter-spacing:0px">IN-FX</div><div class="a" style="left:136.6px;top:499px;width:191.6px;height:11.6px;background:#f8f8f8;"></div><div class="a" style="left:137.8px;top:500.2px;width:181px;height:9.2px;background:#7b777b;"></div><svg style="left:321.4px;top:503.8px" width="4.4" height="2.8" viewBox="0 0 5 3.2"><path d="M0.4 0.4L2.5 2.6L4.6 0.4" fill="none" stroke="#6a666a" stroke-width="0.9"/></svg><div class="t w" style="left:139px;top:500.6px;font-size:6.2px;letter-spacing:-0.4px">-</div><div class="t b" style="left:106.6px;top:524.8px;color:#1a161a;font-size:6.6px;letter-spacing:0.1px">OUT-FX</div><div class="a" style="left:136.6px;top:522.4px;width:191.6px;height:11.6px;background:#f8f8f8;"></div><div class="a" style="left:137.8px;top:523.6px;width:181px;height:9.2px;background:#7b777b;"></div><svg style="left:321.4px;top:527.2px" width="4.4" height="2.8" viewBox="0 0 5 3.2"><path d="M0.4 0.4L2.5 2.6L4.6 0.4" fill="none" stroke="#6a666a" stroke-width="0.9"/></svg><div class="t w" style="left:139px;top:524px;font-size:6.2px;letter-spacing:-0.4px">-</div>
<!-- g5_preview -->
<div class="a" style="left:347.2px;top:42.5px;width:666.6px;height:436.2px;background:#000;"></div><div class="a" style="left:1013.8px;top:42.2px;width:8.8px;height:446px;background:#fcfcfc;"></div><div class="a" style="left:347.2px;top:478.7px;width:675.4px;height:9.3px;background:#fcfcfc;"></div><svg style="left:1015.6px;top:45.6px" width="5" height="3.4" viewBox="0 0 5 3.4"><path d="M0.5 2.9L2.5 0.7L4.5 2.9" fill="none" stroke="#c8c6c8" stroke-width="0.9"/></svg><svg style="left:1015.6px;top:471.6px" width="5" height="3.4" viewBox="0 0 5 3.4"><path d="M0.5 0.5L2.5 2.7L4.5 0.5" fill="none" stroke="#c8c6c8" stroke-width="0.9"/></svg><svg style="left:349.4px;top:480.6px" width="3.4" height="5" viewBox="0 0 3.4 5"><path d="M2.9 0.5L0.7 2.5L2.9 4.5" fill="none" stroke="#c8c6c8" stroke-width="0.9"/></svg><svg style="left:1006.6px;top:480.6px" width="3.4" height="5" viewBox="0 0 3.4 5"><path d="M0.5 0.5L2.7 2.5L0.5 4.5" fill="none" stroke="#c8c6c8" stroke-width="0.9"/></svg><div class="t " style="left:419.4px;top:76.2px;color:#f0f0f0;font-size:6.4px;letter-spacing:-0.2px">2.10s</div><svg style="left:454.2px;top:75px" width="5.6" height="8.6" viewBox="0 0 6 9"><path d="M3.2 0L0.3 5.2H2.6L1.2 9L5.8 3.5H3.5L5.4 0Z" fill="#f6f6f6"/></svg><div class="t " style="left:461.8px;top:76.2px;color:#f0f0f0;font-size:6.4px;letter-spacing:-0.22px">Vorlage: "Medium #992"</div><svg style="left:392.2px;top:85.2px;overflow:hidden" width="514.1" height="289" viewBox="392.2 85.2 514.1 289"><defs><radialGradient id="rg1" gradientUnits="userSpaceOnUse" cx="716" cy="229.5" r="20" spreadMethod="repeat"><stop offset="0" stop-color="#ba6449"/><stop offset="0.12" stop-color="#b9624a"/><stop offset="0.32" stop-color="#b45759"/><stop offset="0.5" stop-color="#b2545c"/><stop offset="0.68" stop-color="#b45759"/><stop offset="0.88" stop-color="#b9624a"/><stop offset="1" stop-color="#ba6449"/></radialGradient><radialGradient id="rg2" gradientUnits="userSpaceOnUse" cx="716" cy="229.5" r="20" spreadMethod="repeat" gradientTransform="translate(716 229.5) scale(1.4 1) translate(-716 -229.5)"><stop offset="0" stop-color="#a93022"/><stop offset="0.26" stop-color="#a93022"/><stop offset="0.33" stop-color="#98487c"/><stop offset="0.39" stop-color="#c49cd8"/><stop offset="0.435" stop-color="#ffffff"/><stop offset="0.52" stop-color="#ffffff"/><stop offset="0.56" stop-color="#fff2a0"/><stop offset="0.6" stop-color="#f8a030"/><stop offset="0.66" stop-color="#e23a22"/><stop offset="0.74" stop-color="#aa3022"/><stop offset="1" stop-color="#a93022"/></radialGradient><radialGradient id="rg2w" gradientUnits="userSpaceOnUse" cx="716" cy="229.5" r="20" spreadMethod="repeat" gradientTransform="translate(716 229.5) scale(1.4 1) translate(-716 -229.5)"><stop offset="0" stop-color="#a93022" stop-opacity="0.25"/><stop offset="0.26" stop-color="#a93022" stop-opacity="0.25"/><stop offset="0.33" stop-color="#a84058" stop-opacity="0.7"/><stop offset="0.39" stop-color="#e8a060"/><stop offset="0.435" stop-color="#fff0a0"/><stop offset="0.52" stop-color="#ffd860"/><stop offset="0.56" stop-color="#ffa838"/><stop offset="0.6" stop-color="#f07028"/><stop offset="0.66" stop-color="#dc3422"/><stop offset="0.74" stop-color="#aa3022" stop-opacity="0.25"/><stop offset="1" stop-color="#a93022" stop-opacity="0.25"/></radialGradient><radialGradient id="rg2c" gradientUnits="userSpaceOnUse" cx="716" cy="229.5" r="20" spreadMethod="repeat" gradientTransform="translate(716 229.5) scale(1.4 1) translate(-716 -229.5)"><stop offset="0" stop-color="#a93022" stop-opacity="0.25"/><stop offset="0.26" stop-color="#a93022" stop-opacity="0.25"/><stop offset="0.33" stop-color="#884890" stop-opacity="0.7"/><stop offset="0.39" stop-color="#b49ce8"/><stop offset="0.435" stop-color="#d8ecff"/><stop offset="0.52" stop-color="#f4f8ff"/><stop offset="0.56" stop-color="#f8e8e0"/><stop offset="0.6" stop-color="#f0a088"/><stop offset="0.66" stop-color="#d84838"/><stop offset="0.74" stop-color="#aa3022" stop-opacity="0.25"/><stop offset="1" stop-color="#a93022" stop-opacity="0.25"/></radialGradient><radialGradient id="rg3" gradientUnits="userSpaceOnUse" cx="716" cy="229.5" r="20" spreadMethod="repeat" gradientTransform="translate(716 229.5) scale(1.4 1) translate(-716 -229.5)"><stop offset="0" stop-color="#c2505a" stop-opacity="0"/><stop offset="0.2" stop-color="#b05068" stop-opacity="0.45"/><stop offset="0.36" stop-color="#9c5c98" stop-opacity="0.85"/><stop offset="0.45" stop-color="#c8ac6c" stop-opacity="0.9"/><stop offset="0.5" stop-color="#dcac50" stop-opacity="0.95"/><stop offset="0.56" stop-color="#e07434" stop-opacity="0.95"/><stop offset="0.63" stop-color="#d62e5c" stop-opacity="0.9"/><stop offset="0.76" stop-color="#cc3a5c" stop-opacity="0.55"/><stop offset="1" stop-color="#c2505a" stop-opacity="0"/></radialGradient><filter id="soft" filterUnits="userSpaceOnUse" x="384.2" y="77.2" width="530.1" height="305"><feGaussianBlur stdDeviation="0.9"/></filter><filter id="mb" x="-20%" y="-20%" width="140%" height="140%"><feGaussianBlur stdDeviation="9"/></filter><filter id="hb" x="-30%" y="-30%" width="160%" height="160%"><feGaussianBlur stdDeviation="6 3.5"/></filter><filter id="hb2" x="-30%" y="-30%" width="160%" height="160%"><feGaussianBlur stdDeviation="2.4 1.6"/></filter><filter id="lb" x="-30%" y="-30%" width="160%" height="160%"><feGaussianBlur stdDeviation="3.2"/></filter><radialGradient id="cx0" gradientUnits="userSpaceOnUse" cx="716" cy="229.5" r="74"><stop offset="0" stop-color="#000"/><stop offset="0.80" stop-color="#000"/><stop offset="0.93" stop-color="#000" stop-opacity="0"/></radialGradient><radialGradient id="cx1" gradientUnits="userSpaceOnUse" cx="716" cy="229.5" r="92"><stop offset="0" stop-color="#000"/><stop offset="0.78" stop-color="#000"/><stop offset="1" stop-color="#000" stop-opacity="0"/></radialGradient><linearGradient id="col" gradientUnits="userSpaceOnUse" x1="672" x2="768" y1="0" y2="0"><stop offset="0" stop-color="#fff" stop-opacity="0"/><stop offset="0.28" stop-color="#fff"/><stop offset="0.72" stop-color="#fff"/><stop offset="1" stop-color="#fff" stop-opacity="0"/></linearGradient><mask id="mk" maskUnits="userSpaceOnUse" x="384.2" y="77.2" width="530.1" height="305"><rect x="672" y="77.2" width="96" height="305" fill="url(#col)"/><circle cx="716" cy="229.5" r="74" fill="url(#cx0)"/></mask><linearGradient id="gmkw" gradientUnits="userSpaceOnUse" x1="656" x2="714" y1="0" y2="0"><stop offset="0" stop-color="#fff" stop-opacity="0"/><stop offset="0.310345" stop-color="#fff"/><stop offset="0.758621" stop-color="#fff"/><stop offset="1" stop-color="#fff" stop-opacity="0"/></linearGradient><mask id="mkw" maskUnits="userSpaceOnUse" x="384.2" y="77.2" width="530.1" height="305"><rect x="656" y="77.2" width="58" height="305" fill="url(#gmkw)"/><circle cx="716" cy="229.5" r="74" fill="url(#cx0)"/></mask><linearGradient id="gmkc" gradientUnits="userSpaceOnUse" x1="722" x2="780" y1="0" y2="0"><stop offset="0" stop-color="#fff" stop-opacity="0"/><stop offset="0.275862" stop-color="#fff"/><stop offset="0.689655" stop-color="#fff"/><stop offset="1" stop-color="#fff" stop-opacity="0"/></linearGradient><mask id="mkc" maskUnits="userSpaceOnUse" x="384.2" y="77.2" width="530.1" height="305"><rect x="722" y="77.2" width="58" height="305" fill="url(#gmkc)"/><circle cx="716" cy="229.5" r="74" fill="url(#cx0)"/></mask><mask id="mk2" maskUnits="userSpaceOnUse" x="384.2" y="77.2" width="530.1" height="305"><g filter="url(#mb)"><path d="M716 219.5 L566 55.2 L866 55.2 Z" fill="#fff"/><path d="M716 239.5 L566 404.2 L866 404.2 Z" fill="#fff"/></g><circle cx="716" cy="229.5" r="92" fill="url(#cx1)"/></mask><linearGradient id="hs" gradientUnits="userSpaceOnUse" x1="672" x2="768" y1="0" y2="0"><stop offset="0" stop-color="#5a7a5c"/><stop offset="0.12" stop-color="#0c8452"/><stop offset="0.30" stop-color="#0e8058"/><stop offset="0.38" stop-color="#3878a8"/><stop offset="0.45" stop-color="#6a78c8"/><stop offset="0.53" stop-color="#a870c8"/><stop offset="0.72" stop-color="#ba74cc"/><stop offset="0.88" stop-color="#c070b0"/><stop offset="1" stop-color="#c06880"/></linearGradient><linearGradient id="hr" gradientUnits="userSpaceOnUse" x1="680" x2="760" y1="0" y2="0"><stop offset="0" stop-color="#2c7c58"/><stop offset="0.22" stop-color="#0a8a50"/><stop offset="0.36" stop-color="#1478c0"/><stop offset="0.55" stop-color="#1c6cd8"/><stop offset="0.66" stop-color="#b47cd4"/><stop offset="0.85" stop-color="#d088cc"/><stop offset="1" stop-color="#c87098"/></linearGradient><linearGradient id="tl2" gradientUnits="userSpaceOnUse" x1="666" x2="758" y1="0" y2="0"><stop offset="0" stop-color="#e83828"/><stop offset="0.15" stop-color="#f8a030"/><stop offset="0.3" stop-color="#fff080"/><stop offset="0.5" stop-color="#ffffff"/><stop offset="0.7" stop-color="#b0e8ff"/><stop offset="0.88" stop-color="#d8a0e0"/><stop offset="1" stop-color="#c86080"/></linearGradient><filter id="hb3" x="-10%" y="-100%" width="120%" height="300%"><feGaussianBlur stdDeviation="1.6 0.7"/></filter><linearGradient id="tl" gradientUnits="userSpaceOnUse" x1="648" x2="782" y1="0" y2="0"><stop offset="0" stop-color="#e04030" stop-opacity="0"/><stop offset="0.1" stop-color="#f05030"/><stop offset="0.2" stop-color="#f0d040"/><stop offset="0.3" stop-color="#30e890"/><stop offset="0.42" stop-color="#30c0f0"/><stop offset="0.55" stop-color="#e888c8"/><stop offset="0.72" stop-color="#f4d8ec"/><stop offset="0.9" stop-color="#e86878"/><stop offset="1" stop-color="#e04030" stop-opacity="0"/></linearGradient><linearGradient id="le" gradientUnits="userSpaceOnUse" x1="392.2" x2="448.2" y1="0" y2="0"><stop offset="0" stop-color="#c0343a" stop-opacity="0.95"/><stop offset="0.35" stop-color="#ba3a34" stop-opacity="0.85"/><stop offset="0.6" stop-color="#c05a34" stop-opacity="0.6"/><stop offset="1" stop-color="#c0603c" stop-opacity="0"/></linearGradient><radialGradient id="rgl" gradientUnits="userSpaceOnUse" cx="62.2" cy="229.5" r="20" spreadMethod="repeat"><stop offset="0" stop-color="#d07858" stop-opacity="0.55"/><stop offset="0.3" stop-color="#c84848" stop-opacity="0.1"/><stop offset="0.55" stop-color="#b83c58" stop-opacity="0.55"/><stop offset="0.8" stop-color="#c84848" stop-opacity="0.1"/><stop offset="1" stop-color="#d07858" stop-opacity="0.55"/></radialGradient><linearGradient id="lm" gradientUnits="userSpaceOnUse" x1="402.2" x2="492.2" y1="0" y2="0"><stop offset="0" stop-color="#fff"/><stop offset="0.5" stop-color="#fff" stop-opacity="0.8"/><stop offset="1" stop-color="#fff" stop-opacity="0"/></linearGradient><mask id="mkl" maskUnits="userSpaceOnUse" x="392.2" y="85.2" width="110" height="289"><rect x="392.2" y="85.2" width="110" height="289" fill="url(#lm)"/></mask><radialGradient id="fd" gradientUnits="userSpaceOnUse" cx="716" cy="229.5" r="340"><stop offset="0.4" stop-color="#b85c52" stop-opacity="0"/><stop offset="0.75" stop-color="#b85c52" stop-opacity="0.45"/><stop offset="1" stop-color="#b85c52" stop-opacity="0.6"/></radialGradient></defs><rect x="392.2" y="85.2" width="514.1" height="289" fill="url(#rg1)"/><rect x="392.2" y="85.2" width="514.1" height="289" fill="url(#fd)" opacity="0.5"/><g filter="url(#mb)" opacity="0.88"><path d="M686 207.5 L475.828 117.506 L560.237 15.1105 Z" fill="#b5584f"/><path d="M686 251.5 L475.828 341.494 L560.237 443.89 Z" fill="#b5584f"/><path d="M746 207.5 L956.172 117.506 L871.763 15.1105 Z" fill="#b5584f"/><path d="M746 251.5 L956.172 341.494 L871.763 443.89 Z" fill="#b5584f"/></g><g filter="url(#soft)"><rect x="384.2" y="77.2" width="530.1" height="305" fill="url(#rg3)" mask="url(#mk2)" opacity="0.75"/><rect x="384.2" y="77.2" width="530.1" height="305" fill="url(#rg2)" mask="url(#mk)"/><rect x="384.2" y="77.2" width="530.1" height="305" fill="url(#rg2w)" mask="url(#mkw)"/><rect x="384.2" y="77.2" width="530.1" height="305" fill="url(#rg2c)" mask="url(#mkc)"/></g><ellipse cx="717" cy="288.5" rx="31" ry="8.5" fill="#a93022" filter="url(#hb2)"/><g filter="url(#hb)"><path d="M672 198L716 165L766 198V272H676V198Z" fill="url(#hs)" opacity="0.9"/></g><g filter="url(#hb2)"><path d="M682 199L716 168L758 199Z" fill="url(#hr)" opacity="0.95"/><path d="M681 199H757V271H681Z" fill="url(#hs)" opacity="0.9"/><path d="M684 200H750V207H684Z" fill="#083c38" opacity="0.32"/><path d="M682 259H756V270H682Z" fill="#102838" opacity="0.25"/><path d="M700 248H756V253H700Z" fill="#e0b0e8" opacity="0.22"/></g><rect x="648" y="195.8" width="126" height="2.8" fill="url(#tl)"/><g filter="url(#hb3)"><rect x="666" y="273.6" width="92" height="3.4" fill="url(#tl2)"/><rect x="678" y="278.6" width="64" height="2.2" fill="#ffc860" opacity="0.85"/></g><rect x="392.2" y="85.2" width="56" height="289" fill="url(#le)"/><rect x="392.2" y="85.2" width="110" height="289" fill="url(#rgl)" mask="url(#mkl)" opacity="0.5"/><g filter="url(#lb)"><rect x="390.2" y="99" width="26" height="10" fill="#e8bca4" opacity="0.7"/><rect x="414.2" y="98" width="18" height="8" fill="#d4b4e4" opacity="0.6"/><rect x="390.2" y="142" width="26" height="10" fill="#e8bca4" opacity="0.7"/><rect x="414.2" y="141" width="18" height="8" fill="#d4b4e4" opacity="0.6"/><rect x="390.2" y="313" width="26" height="10" fill="#e8bca4" opacity="0.7"/><rect x="414.2" y="312" width="18" height="8" fill="#d4b4e4" opacity="0.6"/><rect x="390.2" y="355" width="26" height="10" fill="#e8bca4" opacity="0.7"/><rect x="414.2" y="354" width="18" height="8" fill="#d4b4e4" opacity="0.6"/><path d="M448 90L462 140L478 90Z" fill="#d03850" opacity="0.45"/><path d="M448 190L462 146L478 190Z" fill="#d03850" opacity="0.4"/><path d="M448 368L462 320L478 368Z" fill="#d03850" opacity="0.45"/><path d="M448 268L462 314L478 268Z" fill="#d03850" opacity="0.35"/></g><g filter="url(#hb2)"><rect x="894" y="111" width="14" height="6" fill="#e04858" opacity="0.7"/><rect x="894" y="163" width="14" height="6" fill="#e04858" opacity="0.7"/><rect x="894" y="291" width="14" height="6" fill="#e04858" opacity="0.7"/><rect x="894" y="341" width="14" height="6" fill="#e04858" opacity="0.7"/></g></svg>
<!-- g6_timeline -->
<svg style="left:663.4px;top:496.4px" width="7.2" height="8" viewBox="0 0 7.2 8"><rect x="0" y="0.4" width="1.7" height="7.2" fill="#f6f6f6"/><path d="M7.2 0.4V7.6L2 4Z" fill="#f6f6f6"/></svg><svg style="left:679.4px;top:494.6px" width="11.2" height="12.4" viewBox="0 0 11.2 12.4"><path d="M0.2 0.2L11 6.2L0.2 12.2Z" fill="#fbfbfb"/></svg><svg style="left:699.8px;top:496.4px" width="7.2" height="8" viewBox="0 0 7.2 8"><rect x="5.5" y="0.4" width="1.7" height="7.2" fill="#f6f6f6"/><path d="M0 0.4V7.6L5.2 4Z" fill="#f6f6f6"/></svg><svg style="left:536.4px;top:512px" width="11" height="5.6" viewBox="0 0 11 5.6"><path d="M2.4 2.8H8.6" stroke="#4a464a" stroke-width="2.2"/><circle cx="2" cy="2.8" r="1.9" fill="#f6f6f6" stroke="#4a464a" stroke-width="0.6"/><circle cx="9" cy="2.8" r="1.9" fill="#f6f6f6" stroke="#4a464a" stroke-width="0.6"/><path d="M2 2.8H9" stroke="#f6f6f6" stroke-width="1.1"/></svg><div class="a" style="left:659.4px;top:525.6px;width:50.6px;height:8.4px;background:#676367;"></div><div class="t " style="left:661.6px;top:526px;color:#e6e4e6;font-size:6.2px;letter-spacing:-0.28px">Position: 2.13 sec.</div><div class="a" style="left:347.2px;top:545px;width:675.4px;height:11.8px;background:#8c888c;"></div><div class="a" style="left:347.2px;top:543.4px;width:675.4px;height:1.7px;background:#524e52;"></div><div class="a" style="left:349.9px;top:536.8px;width:1.1px;height:7px;background:#4a464a;"></div><div class="a" style="left:363.31px;top:540.6px;width:0.9px;height:3.2px;background:#5a565a;"></div><div class="a" style="left:376.67px;top:540.6px;width:0.9px;height:3.2px;background:#5a565a;"></div><div class="a" style="left:390.03px;top:540.6px;width:0.9px;height:3.2px;background:#5a565a;"></div><div class="a" style="left:403.39px;top:540.6px;width:0.9px;height:3.2px;background:#5a565a;"></div><div class="a" style="left:416.7px;top:536.8px;width:1.1px;height:7px;background:#4a464a;"></div><div class="a" style="left:430.11px;top:540.6px;width:0.9px;height:3.2px;background:#5a565a;"></div><div class="a" style="left:443.47px;top:540.6px;width:0.9px;height:3.2px;background:#5a565a;"></div><div class="a" style="left:456.83px;top:540.6px;width:0.9px;height:3.2px;background:#5a565a;"></div><div class="a" style="left:470.19px;top:540.6px;width:0.9px;height:3.2px;background:#5a565a;"></div><div class="a" style="left:483.5px;top:536.8px;width:1.1px;height:7px;background:#4a464a;"></div><div class="a" style="left:496.91px;top:540.6px;width:0.9px;height:3.2px;background:#5a565a;"></div><div class="a" style="left:510.27px;top:540.6px;width:0.9px;height:3.2px;background:#5a565a;"></div><div class="a" style="left:523.63px;top:540.6px;width:0.9px;height:3.2px;background:#5a565a;"></div><div class="a" style="left:536.99px;top:540.6px;width:0.9px;height:3.2px;background:#5a565a;"></div><div class="a" style="left:550.3px;top:536.8px;width:1.1px;height:7px;background:#4a464a;"></div><div class="a" style="left:563.71px;top:540.6px;width:0.9px;height:3.2px;background:#5a565a;"></div><div class="a" style="left:577.07px;top:540.6px;width:0.9px;height:3.2px;background:#5a565a;"></div><div class="a" style="left:590.43px;top:540.6px;width:0.9px;height:3.2px;background:#5a565a;"></div><div class="a" style="left:603.79px;top:540.6px;width:0.9px;height:3.2px;background:#5a565a;"></div><div class="a" style="left:617.1px;top:536.8px;width:1.1px;height:7px;background:#4a464a;"></div><div class="a" style="left:630.51px;top:540.6px;width:0.9px;height:3.2px;background:#5a565a;"></div><div class="a" style="left:643.87px;top:540.6px;width:0.9px;height:3.2px;background:#5a565a;"></div><div class="a" style="left:657.23px;top:540.6px;width:0.9px;height:3.2px;background:#5a565a;"></div><div class="a" style="left:670.59px;top:540.6px;width:0.9px;height:3.2px;background:#5a565a;"></div><div class="a" style="left:683.9px;top:536.8px;width:1.1px;height:7px;background:#4a464a;"></div><div class="a" style="left:697.31px;top:540.6px;width:0.9px;height:3.2px;background:#5a565a;"></div><div class="a" style="left:710.67px;top:540.6px;width:0.9px;height:3.2px;background:#5a565a;"></div><div class="a" style="left:724.03px;top:540.6px;width:0.9px;height:3.2px;background:#5a565a;"></div><div class="a" style="left:737.39px;top:540.6px;width:0.9px;height:3.2px;background:#5a565a;"></div><div class="a" style="left:750.7px;top:536.8px;width:1.1px;height:7px;background:#4a464a;"></div><div class="a" style="left:764.11px;top:540.6px;width:0.9px;height:3.2px;background:#5a565a;"></div><div class="a" style="left:777.47px;top:540.6px;width:0.9px;height:3.2px;background:#5a565a;"></div><div class="a" style="left:790.83px;top:540.6px;width:0.9px;height:3.2px;background:#5a565a;"></div><div class="a" style="left:804.19px;top:540.6px;width:0.9px;height:3.2px;background:#5a565a;"></div><div class="a" style="left:817.5px;top:536.8px;width:1.1px;height:7px;background:#4a464a;"></div><div class="a" style="left:830.91px;top:540.6px;width:0.9px;height:3.2px;background:#5a565a;"></div><div class="a" style="left:844.27px;top:540.6px;width:0.9px;height:3.2px;background:#5a565a;"></div><div class="a" style="left:857.63px;top:540.6px;width:0.9px;height:3.2px;background:#5a565a;"></div><div class="a" style="left:870.99px;top:540.6px;width:0.9px;height:3.2px;background:#5a565a;"></div><div class="a" style="left:884.3px;top:536.8px;width:1.1px;height:7px;background:#4a464a;"></div><div class="a" style="left:897.71px;top:540.6px;width:0.9px;height:3.2px;background:#5a565a;"></div><div class="a" style="left:911.07px;top:540.6px;width:0.9px;height:3.2px;background:#5a565a;"></div><div class="a" style="left:924.43px;top:540.6px;width:0.9px;height:3.2px;background:#5a565a;"></div><div class="a" style="left:937.79px;top:540.6px;width:0.9px;height:3.2px;background:#5a565a;"></div><div class="a" style="left:951.1px;top:536.8px;width:1.1px;height:7px;background:#4a464a;"></div><div class="a" style="left:964.51px;top:540.6px;width:0.9px;height:3.2px;background:#5a565a;"></div><div class="a" style="left:977.87px;top:540.6px;width:0.9px;height:3.2px;background:#5a565a;"></div><div class="a" style="left:991.23px;top:540.6px;width:0.9px;height:3.2px;background:#5a565a;"></div><div class="a" style="left:1004.59px;top:540.6px;width:0.9px;height:3.2px;background:#5a565a;"></div><div class="a" style="left:1017.9px;top:536.8px;width:1.1px;height:7px;background:#4a464a;"></div><div class="a" style="left:347.2px;top:535.2px;width:4.2px;height:9.8px;background:linear-gradient(#fbfbfb,#d8d6d8 45%,#6a666a);"></div><div class="a" style="left:1018.4px;top:535.2px;width:4.2px;height:9.8px;background:linear-gradient(#fbfbfb,#d8d6d8 45%,#6a666a);"></div><svg style="left:346.4px;top:546.2px" width="10" height="10" viewBox="0 0 10 10"><path d="M5 0.6L9.4 5L5 9.4L0.6 5Z" fill="#d6cf22" stroke="#3a3a1a" stroke-width="0.8"/></svg><svg style="left:668.2px;top:547.4px" width="7" height="7" viewBox="0 0 7 7"><path d="M3.5 0.6L6.4 3.5L3.5 6.4L0.6 3.5Z" fill="#9a969a" stroke="#2e2a2e" stroke-width="0.9"/></svg><svg style="left:688.4px;top:547.4px" width="7" height="7" viewBox="0 0 7 7"><path d="M3.5 0.6L6.4 3.5L3.5 6.4L0.6 3.5Z" fill="#9a969a" stroke="#2e2a2e" stroke-width="0.9"/></svg><svg style="left:709.2px;top:547.4px" width="7" height="7" viewBox="0 0 7 7"><path d="M3.5 0.6L6.4 3.5L3.5 6.4L0.6 3.5Z" fill="#9a969a" stroke="#2e2a2e" stroke-width="0.9"/></svg><svg style="left:1015.3px;top:547.4px" width="7" height="7" viewBox="0 0 7 7"><path d="M3.5 0.6L6.4 3.5L3.5 6.4L0.6 3.5Z" fill="#9a969a" stroke="#2e2a2e" stroke-width="0.9"/></svg><div class="a" style="left:540.4px;top:538.6px;width:1.1px;height:18.2px;background:#d81a24;"></div><svg style="left:536.4px;top:535px" width="9.2" height="5" viewBox="0 0 9.2 5"><path d="M0.5 0.5H8.7L4.6 4.5Z" fill="#fbfbfb" stroke="#d8323a" stroke-width="0.9"/></svg><div class="a" style="left:350.6px;top:560.6px;width:6px;height:6.2px;background:#8d898d;border:0.9px solid #3e3a3e"></div><div class="t w" style="left:360.2px;top:560.8px;font-size:6px;letter-spacing:-0.3px">Keyframes</div><div class="a" style="left:1022.6px;top:15.2px;width:1.4px;height:555px;background:#39424c;"></div>
</body></html>
